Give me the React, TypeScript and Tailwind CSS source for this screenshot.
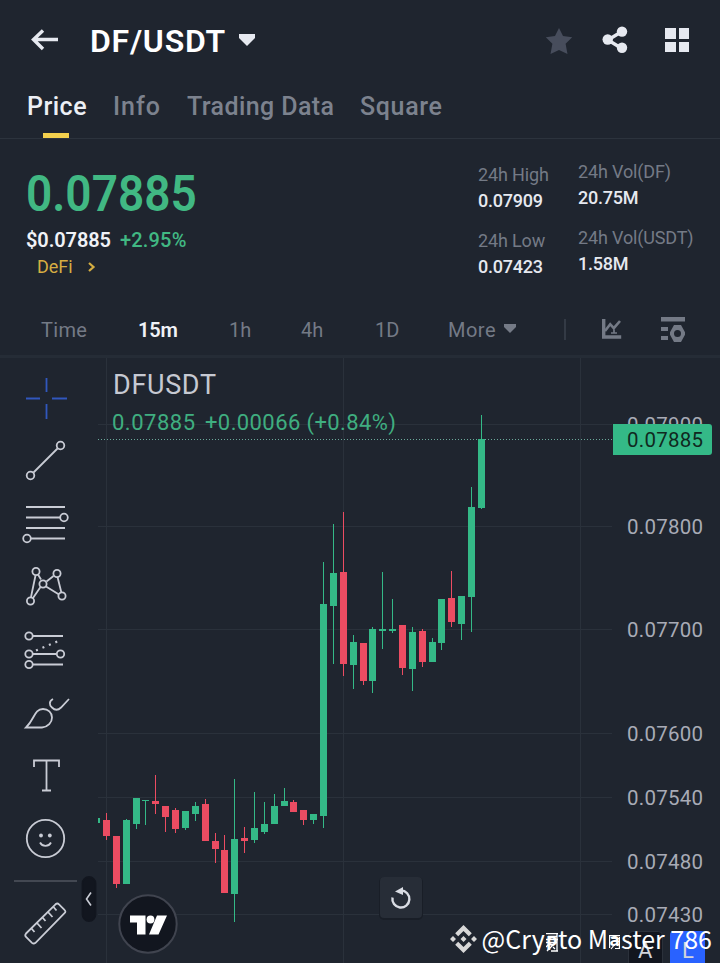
import React from "react";

type Candle = [x: number, top: number, bottom: number, high: number, low: number, up: boolean];

const UP = "#34b987";
const DOWN = "#ec4c62";

// x center, body top, body bottom, wick top, wick bottom, direction
const candles: Candle[] = [
  [106.5, 820, 836, 813, 840, false],
  [116.5, 836, 884, 836, 888, false],
  [126.5, 820, 884, 819, 884, true],
  [136.5, 798, 824, 798, 829, true],
  [145.5, 800, 801, 800, 825, true],
  [155.5, 801, 804, 775, 814, false],
  [165.5, 806, 817, 806, 832, false],
  [175.5, 810, 829, 808, 833, false],
  [185.5, 811, 828, 811, 830, true],
  [195.5, 806, 814, 802, 821, true],
  [205.5, 804, 841, 799, 841, false],
  [215.5, 841, 849, 833, 863, false],
  [224.5, 850, 893, 835, 893, false],
  [234.5, 839, 894, 779, 922, true],
  [244.5, 838, 841, 827, 853, false],
  [254.5, 828, 840, 792, 843, true],
  [264.5, 824, 832, 802, 834, true],
  [274.5, 806, 824, 794, 824, true],
  [284.5, 801, 806, 788, 806, true],
  [293.5, 802, 812, 800, 812, false],
  [303.5, 810, 820, 810, 825, false],
  [313.5, 814, 820, 814, 824, true],
  [323.5, 604, 816, 562, 828, true],
  [333.5, 573, 606, 524, 664, true],
  [343.5, 572, 664, 512, 676, false],
  [353.5, 642, 665, 635, 689, true],
  [363.5, 643, 681, 643, 685, false],
  [372.5, 629, 681, 627, 693, true],
  [382.5, 629, 631, 572, 649, true],
  [392.5, 629, 631, 599, 633, true],
  [402.5, 625, 668, 625, 675, false],
  [412.5, 632, 669, 627, 691, true],
  [422.5, 631, 662, 629, 667, false],
  [432.5, 642, 662, 638, 662, true],
  [441.5, 599, 643, 599, 650, true],
  [451.5, 598, 622, 571, 627, false],
  [461.5, 596, 624, 596, 640, true],
  [471.5, 507, 597, 487, 632, true],
  [481.5, 439, 508, 415, 509, true],
];

const levels = [
  { y: 424.5, label: "0.07900" },
  { y: 526.5, label: "0.07800" },
  { y: 629.5, label: "0.07700" },
  { y: 733.5, label: "0.07600" },
  { y: 797.5, label: "0.07540" },
  { y: 861.5, label: "0.07480" },
  { y: 914.5, label: "0.07430" },
];

const Header = () => (
  <header className="flex h-20 items-center pl-[31px] pr-[31px]">
    <svg width="28" height="22" viewBox="0 0 28 22" fill="none" stroke="#e6e9f0" strokeWidth="3.4">
      <path d="M12 1.5 2.5 10.5 12 20M3 10.5h24" />
    </svg>
    <h1 className="ml-[31px] mt-[2px] w-[136px] whitespace-nowrap text-[32px] font-semibold leading-none tracking-[0.75px] text-white">
      DF/USDT
    </h1>
    <svg className="ml-[12px]" width="18" height="14" viewBox="0 0 18 14" fill="#e6e9f0">
      <path d="M1 1h16v4L9 13 1 5z" />
    </svg>
    <div className="ml-auto flex items-center">
      <svg className="mt-[1px]" width="28" height="28" viewBox="0 0 28 28" fill="#474d5c">
        <path d="M14 1l4 8 9.2 1.3-6.6 6.4L22.5 27 14 22.9 5.5 27l1.9-10.3L.8 10.3 10 9z" />
      </svg>
      <svg className="ml-[28px]" width="28" height="28" viewBox="0 0 28 28" fill="#e6e9f0">
        <path d="M20 6 7 14l13 8" fill="none" stroke="#e6e9f0" strokeWidth="3.4" />
        <circle cx="21" cy="5.6" r="5.2" />
        <circle cx="6.7" cy="13.5" r="5.2" />
        <circle cx="21" cy="21.8" r="5.2" />
      </svg>
      <div className="ml-[36px] grid grid-cols-2 gap-[3px]">
        <i className="h-[10.5px] w-[10.5px] bg-[#e6e9f0]" />
        <i className="h-[10.5px] w-[10.5px] bg-[#e6e9f0]" />
        <i className="h-[10.5px] w-[10.5px] bg-[#e6e9f0]" />
        <i className="h-[10.5px] w-[10.5px] bg-[#e6e9f0]" />
      </div>
    </div>
  </header>
);

const Tabs = () => (
  <nav className="flex h-[59px] border-b border-[#2c333d] pl-[27px] text-[25px] font-medium leading-[54px] text-[#7c828e]">
    <div className="flex w-[60px] flex-col items-center text-[#eceff5]">
      <span className="h-[53px] tracking-[0.5px]">Price</span>
      <span className="ml-4 h-[5px] w-[26px] shrink-0 self-start bg-[#f3d04d]" />
    </div>
    <span className="ml-[26px] w-[74px] tracking-[1px]">Info</span>
    <span className="w-[173px] whitespace-nowrap tracking-[0.4px]">Trading Data</span>
    <span className="tracking-[0.65px]">Square</span>
  </nav>
);

interface StatProps {
  label: string;
  value: string;
}

const Stat: React.FC<StatProps> = ({ label, value }) => (
  <div className="h-[66px] whitespace-nowrap">
    <div className="text-[18px] leading-[26px] tracking-[-0.15px] text-[#747a86]">{label}</div>
    <div className="text-[18px] font-medium leading-[26px] tracking-[-0.25px] text-[#e6e9f0]">{value}</div>
  </div>
);

const Summary = () => (
  <section className="flex h-[167px]">
    <div className="w-[478px] pl-[26px] pt-[28px]">
      <div className="w-max origin-left scale-x-[0.92] text-[50px] font-semibold leading-[54px] text-[#41b883]">
        0.07885
      </div>
      <div className="mt-[6px] flex gap-[9px] text-[20px] font-medium leading-[26px]">
        <span className="font-semibold tracking-[-0.1px] text-[#f0f2f7]">$0.07885</span>
        <span className="tracking-[0.2px] text-[#41b883]">+2.95%</span>
      </div>
      <div className="flex items-center pl-[11px] text-[18px] leading-[28px] text-[#d5ae42]">
        DeFi
        <svg className="ml-[14px]" width="9" height="12" viewBox="0 0 9 12" fill="none" stroke="#d5ae42" strokeWidth="2.2">
          <path d="M2 2l4.5 4L2 10" />
        </svg>
      </div>
    </div>
    <div className="w-[100px] pt-[23px]">
      <Stat label="24h High" value="0.07909" />
      <Stat label="24h Low" value="0.07423" />
    </div>
    <div className="pt-[20px]">
      <Stat label="24h Vol(DF)" value="20.75M" />
      <Stat label="24h Vol(USDT)" value="1.58M" />
    </div>
  </section>
);

const Intervals = () => (
  <div className="flex h-[52px] items-center border-b-[3px] border-[#252c36] pb-[2px] pl-[41px] text-[20px] text-[#747a86]">
    <span className="w-[97px] tracking-[0.3px]">Time</span>
    <span className="w-[91px] font-semibold tracking-[-0.2px] text-[#f0f2f7]">15m</span>
    <span className="w-[72px]">1h</span>
    <span className="w-[74px]">4h</span>
    <span className="w-[73px]">1D</span>
    <span className="w-[56px] tracking-[0.5px]">More</span>
    <svg className="mb-[2px]" width="12" height="9" viewBox="0 0 12 9" fill="#747a86">
      <path d="M0 0h12v3L6 9 0 3z" />
    </svg>
    <i className="ml-[48px] h-[21px] w-[2px] bg-[#333a45]" />
    <svg className="mb-px ml-[36px]" width="20" height="20" viewBox="0 0 20 20" fill="none" stroke="#747a86">
      <path d="M1.7 0v18h17.5" strokeWidth="3.4" />
      <path d="M3 12l5.2-6.8 3.6 4L18 2" strokeWidth="2.6" />
      <path d="M12 10.5v4M9 14h6" strokeWidth="1.7" />
    </svg>
    <svg className="ml-[38px]" width="26" height="27" viewBox="0 0 26 27" fill="#747a86">
      <path d="M1 1h24v4.5H1zM1 11h7v4H1zM1 20h7v4H1z" />
      <path fillRule="evenodd" d="M14 9h7l4 7.2v2.6L21 26h-7l-4-7.2v-2.6zM17.5 14a3.5 3.5 0 1 0 0 7 3.5 3.5 0 1 0 0-7z" />
    </svg>
  </div>
);

const Toolbar = () => (
  <aside className="h-[605px] w-[98px] shrink-0">
    <svg width="98" height="605" viewBox="0 358 98 605" fill="none" stroke="#c9ccd5" strokeWidth="1.8">
      <path d="M26 398.5h14M52 398.5h15M46.5 378v14M46.5 404v15" stroke="#3157bd" />
      <path d="M33.5 472.5 57.5 448.5" />
      <circle cx="60.5" cy="445.5" r="3.8" />
      <circle cx="30.5" cy="475.5" r="3.8" />

      <path d="M26 507h39M26 517.5h34M26 528h39M31 538.5h34" />
      <circle cx="64" cy="517.5" r="3.8" />
      <circle cx="27" cy="538.5" r="3.8" />

      <path d="M35.5 575.5 31 597M38 574.5l3 5M46.5 581.5 53.5 576M57.5 577l4 16M46 586.5l13 8M40.5 587 33 598" />
      <circle cx="36" cy="571.5" r="3.6" />
      <circle cx="57" cy="573.5" r="3.6" />
      <circle cx="43" cy="584" r="3.6" />
      <circle cx="30.5" cy="601" r="3.6" />
      <circle cx="62" cy="596" r="3.6" />

      <path d="M33 636h30M33 654h23M33 664.5h30" />
      <path d="M36 650.5 61 640" strokeDasharray="2 5" strokeWidth="2.2" />
      <circle cx="29" cy="636" r="3.7" />
      <circle cx="29" cy="654" r="3.7" />
      <circle cx="60.5" cy="654" r="3.7" />
      <circle cx="29" cy="664.5" r="3.7" />

      <path d="M26 727.5h16c6-.5 10-5 10-10 0-5-4-8.5-9-8.5-9 0-8 10-17 18.5zM53 699c-4 2-4 6-1 8.500 3 3 6 3 9 0l8-8.500" />
      <path d="M34 767v-6.5h25v6.5M46.5 760.5v30M42 790.5h9" />
      <circle cx="45.5" cy="838.5" r="18.7" />
      <path d="M40 842.5c2.5 4.5 8.5 4.5 11 0" />
      <g fill="#c9ccd5" stroke="none">
        <circle cx="41" cy="835.5" r="1.9" />
        <circle cx="49.8" cy="835.5" r="1.9" />
      </g>

      <path d="M14 881h63" stroke="#434852" />
      <path d="M26 933.5 55.5 904.3q1.8-1.5 3.5 0l5.5 5.5q1.8 1.7 0 3.400L35.500 942.800q-1.800 1.500-3.500 0L26 937q-1.500-1.700 0-3.500z" />
      <path d="M31.5 928.5l3 3.5M37 923l4.5 5M42.5 917.5l3 3.5M48 912l4.5 5M53.5 907l3 3.5" />
      <rect x="82.5" y="877" width="13" height="44" rx="6.5" fill="#12161f" stroke="#12161f" />
      <path d="M91 892.5 86.5 899l4.5 6.5" strokeWidth="1.6" />
    </svg>
  </aside>
);

const Chart = () => (
  <svg
    className="block shrink-0 font-[Roboto,'Liberation_Sans',sans-serif]"
    width="622"
    height="605"
    viewBox="98 358 622 605"
  >
    <path d="M106.5 358v605M343.5 358v605M580.5 358v605" stroke="#2a313b" />
    {levels.map((level) => (
      <g key={level.label}>
        <path d={`M98 ${level.y}h514`} stroke="#2a313b" />
        <text x="627" y={level.y + 7.5} fill="#a8abb6" fontSize="20.5" textLength="76">
          {level.label}
        </text>
      </g>
    ))}
    <path d="M98 439.5h515" stroke="#6ba99b" strokeDasharray="1 2" />
    <path d="M99 818v5" stroke={UP} strokeWidth="2" />
    {candles.map(([x, top, bottom, high, low, up]) => (
      <g key={x} fill={up ? UP : DOWN}>
        <rect x={x - 0.5} y={high} width="1" height={low - high} />
        <rect x={x - 3.5} y={top} width="7" height={bottom - top} />
      </g>
    ))}

    <text x="113" y="394" fill="#c6c9d2" fontSize="27" textLength="103">DFUSDT</text>
    <text x="112" y="430" fill="#3fae80" fontSize="22" textLength="83">0.07885</text>
    <text x="205" y="430" fill="#3fae80" fontSize="22" textLength="191">+0.00066 (+0.84%)</text>

    <path d="M613 424h96q3 0 3 3v25q0 3-3 3h-96z" fill={UP} />
    <text x="627" y="447" fill="#10291f" fontSize="20.5" textLength="76">0.07885</text>

    {/* TradingView badge */}
    <circle cx="148" cy="924" r="28.7" fill="#12161f" stroke="#40444f" strokeWidth="2" />
    <path d="M130 915.5h15.5v19H137v-12h-7zM157 915.5h10l-8.5 19H149z" fill="#fff" />
    <circle cx="150.5" cy="919.5" r="3.9" fill="#fff" />

    {/* Reset button */}
    <rect x="379" y="877" width="44" height="43" rx="5" fill="#191e27" />
    <rect x="380" y="877" width="42" height="41" rx="4" fill="#272d37" />
    <path d="M392.5 897.5a8.5 8.5 0 1 0 8.5-7" fill="none" stroke="#dadde4" strokeWidth="2.4" />
    <path d="M395 891.5 403 887v8z" fill="#dadde4" />

    <rect x="628.5" y="931.5" width="34" height="36" rx="4" fill="#12161f" stroke="#2b313b" />
    <rect x="670" y="931" width="35" height="36" rx="4" fill="#2962ff" />
    <text x="638" y="958" fill="#d1d4dc" fontSize="22">A</text>
    <text x="682" y="958" fill="#d1d4dc" fontSize="22">L</text>
  </svg>
);

const Glitch: React.FC<{ letter: string }> = ({ letter }) => (
  <span className="relative mx-px inline-block w-[11px] text-center text-[18px] font-bold">
    {letter}
    {letter === "p" ? (
      <svg className="absolute left-0 top-[8px]" width="12" height="19" viewBox="0 0 12 19" fill="none" stroke="#fff" strokeWidth="1.3">
        <path d="M0 .7h12M2 3.5h9M0 6.5h12M0 9.5h11M11 0v18M0 14l4-4M1 18l7-7M5 18h7M7 14l2 2" />
      </svg>
    ) : (
      <svg className="absolute left-0 top-[10px]" width="11" height="15" viewBox="0 0 11 15" fill="none" stroke="#fff" strokeWidth="1.2">
        <path d="M.6 0v13M0 .7h11M3 3.5h7M3 6.5h7M4 9.5h6M2 14l4-5M6 13.5h5M10.4 2v12" />
      </svg>
    )}
  </span>
);

const Signature = () => (
  <div className="absolute bottom-0 right-[8px] flex h-[49px] items-center whitespace-nowrap font-['Noto_Sans_CJK_SC','Noto_Sans',sans-serif] text-[25px] text-white">
    <svg className="mr-[4px]" width="27" height="28" viewBox="0 0 27 28" fill="#d8d8d8">
      <path d="M13.5 0l8.3 8.3-3 3-5.3-5.3-5.3 5.3-3-3zM13.5 28l8.3-8.3-3-3-5.3 5.3-5.3-5.3-3 3zM13.5 11l3 3-3 3-3-3zM3 11l3 3-3 3-3-3zM24 11l3 3-3 3-3-3z" />
    </svg>
    <span className="tracking-[0.1px]">@Cry</span>
    <Glitch letter="p" />
    <span>to M</span>
    <Glitch letter="a" />
    <span>ster 786</span>
  </div>
);

export default function App() {
  return (
    <main className="relative h-[963px] w-[720px] overflow-hidden bg-[#1f252f] font-['Roboto','Liberation_Sans',sans-serif]">
      <Header />
      <Tabs />
      <Summary />
      <Intervals />
      <div className="flex">
        <Toolbar />
        <Chart />
      </div>
      <Signature />
    </main>
  );
}
